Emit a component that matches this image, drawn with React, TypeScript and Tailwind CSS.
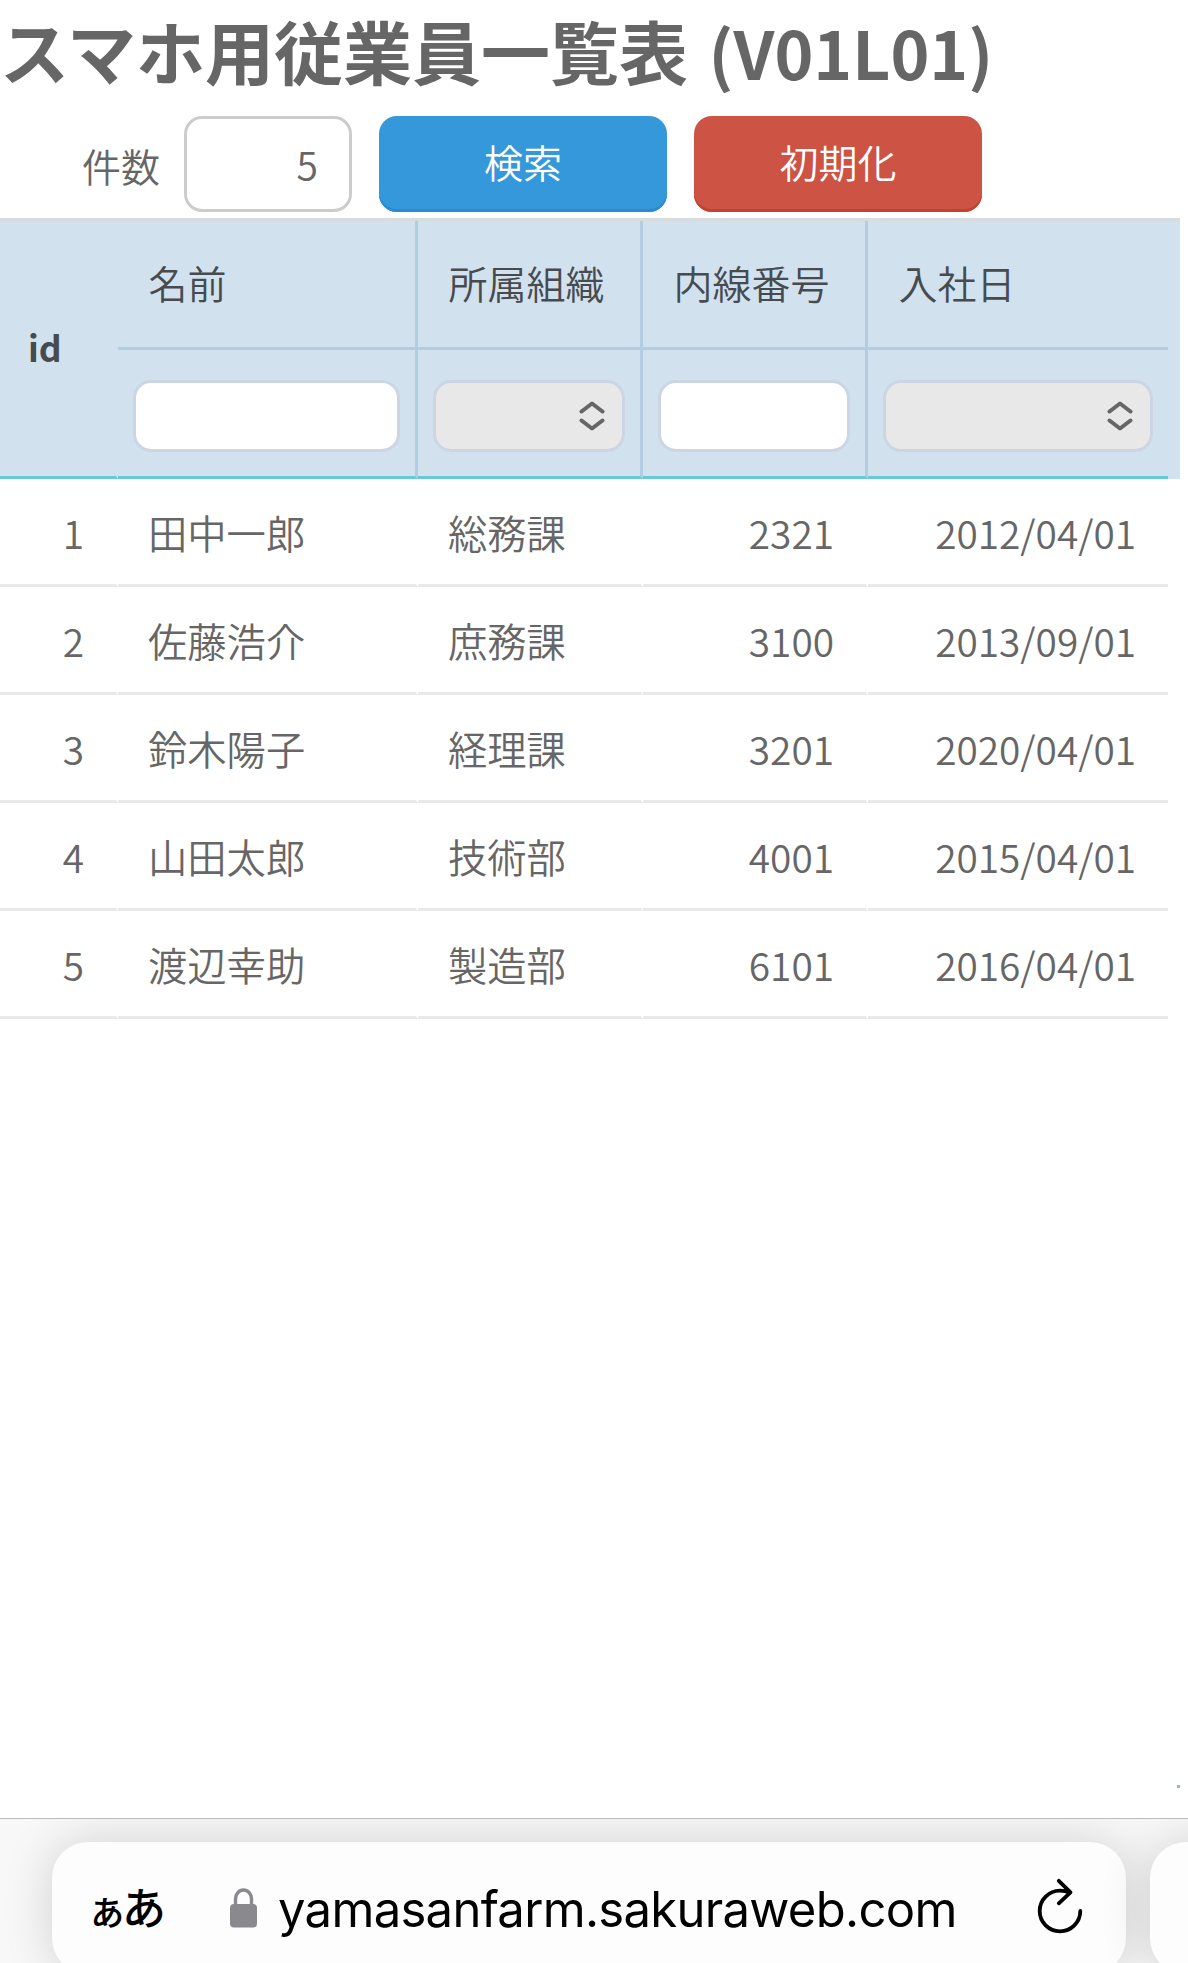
import clsx from "clsx";

type Employee = {
    id: number;
    name: string;
    section: string;
    ext: string;
    joined: string;
};

const employees: Employee[] = [
    { id: 1, name: "田中一郎", section: "総務課", ext: "2321", joined: "2012/04/01" },
    { id: 2, name: "佐藤浩介", section: "庶務課", ext: "3100", joined: "2013/09/01" },
    { id: 3, name: "鈴木陽子", section: "経理課", ext: "3201", joined: "2020/04/01" },
    { id: 4, name: "山田太郎", section: "技術部", ext: "4001", joined: "2015/04/01" },
    { id: 5, name: "渡辺幸助", section: "製造部", ext: "6101", joined: "2016/04/01" },
];

const headers = ["名前", "所属組織", "内線番号", "入社日"];

function SelectBox(){
    return (
        <div
            className="flex h-[72px] items-center justify-end rounded-[18px]
                border-[3px] border-[#ccd6e3] bg-[#e8e8e8] pr-[17px]"
        >
            <svg width="26" height="30" viewBox="0 0 26 30" fill="none">
                <path
                    d="M2.5 10.5 13 2.5l10.5 8M2.5 19.5 13 27.5l10.5-8"
                    stroke="#666"
                    strokeWidth="4"
                    strokeLinecap="round"
                    strokeLinejoin="round"
                />
            </svg>
        </div>
    )
}

function TextBox(){
    return (
        <input
            type="text"
            className="block h-[72px] w-full rounded-[18px] border-[3px]
                border-[#ccd6e3] bg-white outline-none"
        />
    )
}

function EmployeeTable(){
    const filterCell = "h-[129px] border-b-[3px] border-b-[#67c8dc] border-r-[#b0cde2] pl-[15px] pr-[15px] pt-[6px] pb-0 align-middle";
    const cell = "h-[108px] border-b-[3px] border-b-[#e9e9e9] border-r-white p-0 align-middle leading-none";
    const numCell = "pt-[2px] text-right text-[38.8px]";

    return (
        <table className="w-[1168px] table-fixed border-separate border-spacing-0 text-[39.3px] text-[#666]">
            <colgroup>
                <col className="w-[118px]" />
                <col className="w-[300px]" />
                <col className="w-[225px]" />
                <col className="w-[225px]" />
                <col className="w-[300px]" />
            </colgroup>
            {/* --- Header + filters --- */}
            <thead className="text-[#464b4f]">
                <tr>
                    <th
                        rowSpan={2}
                        className="border-b-[3px] border-r-2 border-b-[#67c8dc] border-r-[#d2e1ee] pl-[28px]
                            pb-[4px] text-left align-middle text-[35.5px] font-bold leading-none"
                    >
                        id
                    </th>
                    {headers.map((label, idx) => (
                        <th
                            key={label}
                            className={clsx(
                                "h-[129px] border-b-[3px] border-[#b0cde2] p-0 pb-[4px] pl-[30.5px] text-left align-middle text-[39px] font-[350] leading-none",
                                idx < 3 && "border-r-[3px]"
                            )}
                        >
                            {label}
                        </th>
                    ))}
                </tr>
                <tr>
                    <td className={clsx(filterCell, "border-r-[3px]")}><TextBox /></td>
                    <td className={clsx(filterCell, "border-r-[3px]")}><SelectBox /></td>
                    <td className={clsx(filterCell, "border-r-[3px]")}><TextBox /></td>
                    <td className={filterCell}><SelectBox /></td>
                </tr>
            </thead>
            {/* --- Rows --- */}
            <tbody className="bg-white font-[350]">
                {employees.map((emp) => (
                    <tr key={emp.id}>
                        <td className={clsx(cell, numCell, "border-r-2")}><span className="pr-[32px]">{emp.id}</span></td>
                        <td className={clsx(cell, "border-r-2")}><span className="pl-[30px]">{emp.name}</span></td>
                        <td className={clsx(cell, "border-r-2")}><span className="pl-[30px]">{emp.section}</span></td>
                        <td className={clsx(cell, numCell, "border-r-2")}><span className="pr-[32px]">{emp.ext}</span></td>
                        <td className={clsx(cell, numCell)}><span className="pr-[32px]">{emp.joined}</span></td>
                    </tr>
                ))}
            </tbody>
        </table>
    )
}

function AddressBar(){
    return (
        <div className="flex h-[145px] shrink-0 gap-6 overflow-hidden border-t border-[#bbb] bg-[#f8f8f8] pl-[52px] pt-[23px]">
            <div
                className="flex h-[132px] w-[1074px] shrink-0 rounded-[36px] bg-[#fdfdfd]
                    shadow-[0_0_50px_rgba(0,0,0,0.16)]"
            >
                <div className="flex w-[178px] items-baseline pl-[35px] pt-[34px] font-medium leading-[60px] text-black">
                    <span className="text-[40px] tracking-[-5px]">ぁ</span>
                    <span className="text-[44px]">あ</span>
                </div>
                <svg className="mt-[46px] shrink-0" width="27" height="40" viewBox="0 0 27 40" fill="none">
                    <path d="M5.5 18V11a8 9 0 0 1 16 0v7" stroke="#8a8a8e" strokeWidth="3.4" />
                    <rect y="16" width="27" height="23.5" rx="4" fill="#8a8a8e" />
                </svg>
                <span
                    className="ml-[21px] mt-[38px] w-[690px] whitespace-nowrap font-['Inter',sans-serif]
                        text-[49px] leading-[60px] tracking-[-0.7px] text-black"
                >
                    yamasanfarm.sakuraweb.com
                </span>
                <svg className="ml-[68px] mt-[35px] shrink-0" width="48" height="58" viewBox="0 0 48 58" fill="none">
                    <path
                        d="M44.3 34A20.3 20.3 0 1 1 24 13.7q5 0 10 1.8M22.8 3.8l11.7 11.5-11.7 11"
                        stroke="#000"
                        strokeWidth="3.8"
                        strokeLinecap="round"
                        strokeLinejoin="round"
                    />
                </svg>
            </div>
            {/* next tab */}
            <div className="h-[132px] w-[200px] shrink-0 rounded-[36px] bg-[#fdfdfd] shadow-[0_0_50px_rgba(0,0,0,0.16)]" />
        </div>
    )
}

export default function App(){
    return (
        <main
            lang="ja"
            className="flex h-[1963px] w-[1188px] flex-col overflow-hidden bg-white
                font-['Noto_Sans_CJK_JP',sans-serif] text-[#666]"
        >
            <h1 className="h-[116px] shrink-0 whitespace-nowrap text-[69px] font-bold leading-[100px]">
                スマホ用従業員一覧表 <span className="ml-[5px] text-[66px]">(V01L01)</span>
            </h1>
            {/* --- Search form --- */}
            <div className="flex h-[102px] shrink-0 items-start pl-[82px] text-[39px] font-[350]">
                <label htmlFor="count" className="w-[102px] leading-[98px]">件数</label>
                <input
                    id="count"
                    type="text"
                    defaultValue="5"
                    className="h-24 w-[168px] rounded-[18px] border-[3px] border-[#ccc] pr-[31px]
                        pb-[1px] text-right outline-none"
                />
                <button
                    className="ml-[27px] h-24 w-72 rounded-[18px] bg-[#3498db] pb-1.5
                        text-white shadow-[inset_0_-3px_0_#2a8bd0]"
                >
                    検索
                </button>
                <button
                    className="ml-[27px] h-24 w-72 rounded-[18px] bg-[#cd5344] pb-1.5
                        text-white shadow-[inset_0_-3px_0_#c3412f]"
                >
                    初期化
                </button>
            </div>
            {/* --- List --- */}
            <div className="h-[261px] w-[1180px] shrink-0 border-t-[3px] border-[#d9dcde] bg-[#d2e1ee]">
                <EmployeeTable />
            </div>
            <div className="flex flex-1 items-end justify-end pb-[30px] pr-2">
                <span className="size-[3px] bg-[#8fb9c6]" />
            </div>
            <AddressBar />
        </main>
    )
}
